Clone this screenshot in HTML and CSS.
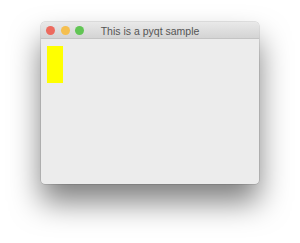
FILE: index.html
```html
<!DOCTYPE html>
<html lang="en">
<head>
  <meta charset="UTF-8">
  <title>This is a pyqt sample</title>
  <link rel="stylesheet" href="styles.css">
</head>
<body>
  <div class="window">
    <div class="titlebar">
      <div class="lights">
        <span class="light close"></span>
        <span class="light min"></span>
        <span class="light max"></span>
      </div>
      <div class="title">This is a pyqt sample</div>
    </div>
    <div class="content">
      <div class="box"></div>
    </div>
  </div>
</body>
</html>
```

FILE: styles.css
```css
* {
  margin: 0;
  padding: 0;
  box-sizing: border-box;
}

html, body {
  height: 100%;
}

body {
  background: #fff;
  font-family: "Liberation Sans", Arial, sans-serif;
  padding: 22px 0 0 41px;
}

.window {
  width: 218px;
  height: 162px;
  border-radius: 4px;
  background: #ececec;
  box-shadow: 0 0 0 0.5px rgba(0, 0, 0, 0.2), 0 18px 30px rgba(0, 0, 0, 0.5);
  overflow: hidden;
  display: flex;
  flex-direction: column;
}

.titlebar {
  position: relative;
  height: 17px;
  background: linear-gradient(#e9e9e9, #d4d4d4);
  border-bottom: 1px solid #c4c4c4;
  display: flex;
  align-items: center;
  justify-content: center;
}

.lights {
  position: absolute;
  left: 5px;
  top: 4px;
  display: flex;
  gap: 5.5px;
}

.light {
  width: 9px;
  height: 9px;
  border-radius: 50%;
}

.close { background: #ed6a5e; }
.min { background: #f5bf4f; }
.max { background: #61c554; }

.title {
  font-size: 10.5px;
  color: #555;
  padding-top: 2px;
}

.content {
  flex: 1;
  padding: 7px 0 0 6px;
}

.box {
  width: 16px;
  height: 37px;
  background: #ffff00;
}
```
